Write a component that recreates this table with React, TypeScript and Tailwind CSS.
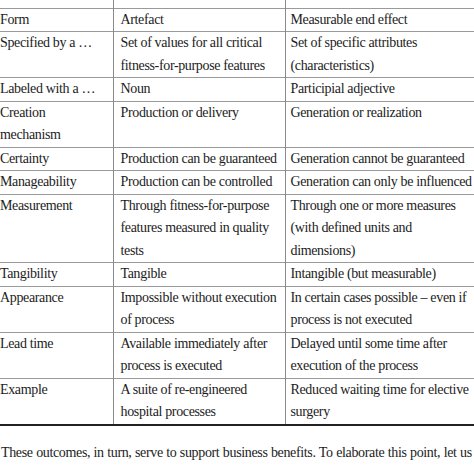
const rows: [string, string, string][] = [
  ["Form", "Artefact", "Measurable end effect"],
  [
    "Specified by a …",
    "Set of values for all critical fitness-for-purpose features",
    "Set of specific attributes (characteristics)",
  ],
  ["Labeled with a …", "Noun", "Participial adjective"],
  ["Creation mechanism", "Production or delivery", "Generation or realization"],
  ["Certainty", "Production can be guaranteed", "Generation cannot be guaranteed"],
  ["Manageability", "Production can be controlled", "Generation can only be influenced"],
  [
    "Measurement",
    "Through fitness-for-purpose features measured in quality tests",
    "Through one or more measures (with defined units and dimensions)",
  ],
  ["Tangibility", "Tangible", "Intangible (but measurable)"],
  [
    "Appearance",
    "Impossible without execution of process",
    "In certain cases possible – even if process is not executed",
  ],
  [
    "Lead time",
    "Available immediately after process is executed",
    "Delayed until some time after execution of the process",
  ],
  [
    "Example",
    "A suite of re-engineered hospital processes",
    "Reduced waiting time for elective surgery",
  ],
];

export default function App() {
  return (
    <div className="w-[474px] h-[474px] overflow-hidden bg-white text-[#1c1c1c] font-['Liberation_Serif',serif] text-[14px] leading-[22.5px] tracking-[-0.35px]">
      <table className="w-full table-fixed border-collapse">
        <colgroup>
          <col className="w-[113px]" />
          <col className="w-[172px]" />
          <col />
        </colgroup>
        <tbody>
          {/* header row, cut off by the crop */}
          <tr className="h-[8px] border-b border-[#9a9a9a]">
            <td className="p-0" />
            <td className="p-0 border-l border-[#8a8a8a]" />
            <td className="p-0 border-l border-[#8a8a8a]" />
          </tr>
          {rows.map(([a, b, c], i) => (
            <tr
              key={a}
              className={
                i === rows.length - 1
                  ? "border-b-2 border-[#222]"
                  : "border-b border-[#9a9a9a]"
              }
            >
              <td className="p-0 pr-[8px] align-top">{a}</td>
              <td className="p-0 pl-[7px] align-top border-l border-[#8a8a8a]">{b}</td>
              <td className="p-0 pl-[5px] align-top border-l border-[#8a8a8a]">{c}</td>
            </tr>
          ))}
        </tbody>
      </table>
      <p className="mt-[16px] whitespace-nowrap pl-px [word-spacing:0.3px]">
        These outcomes, in turn, serve to support business benefits. To elaborate this point, let us
      </p>
    </div>
  );
}
